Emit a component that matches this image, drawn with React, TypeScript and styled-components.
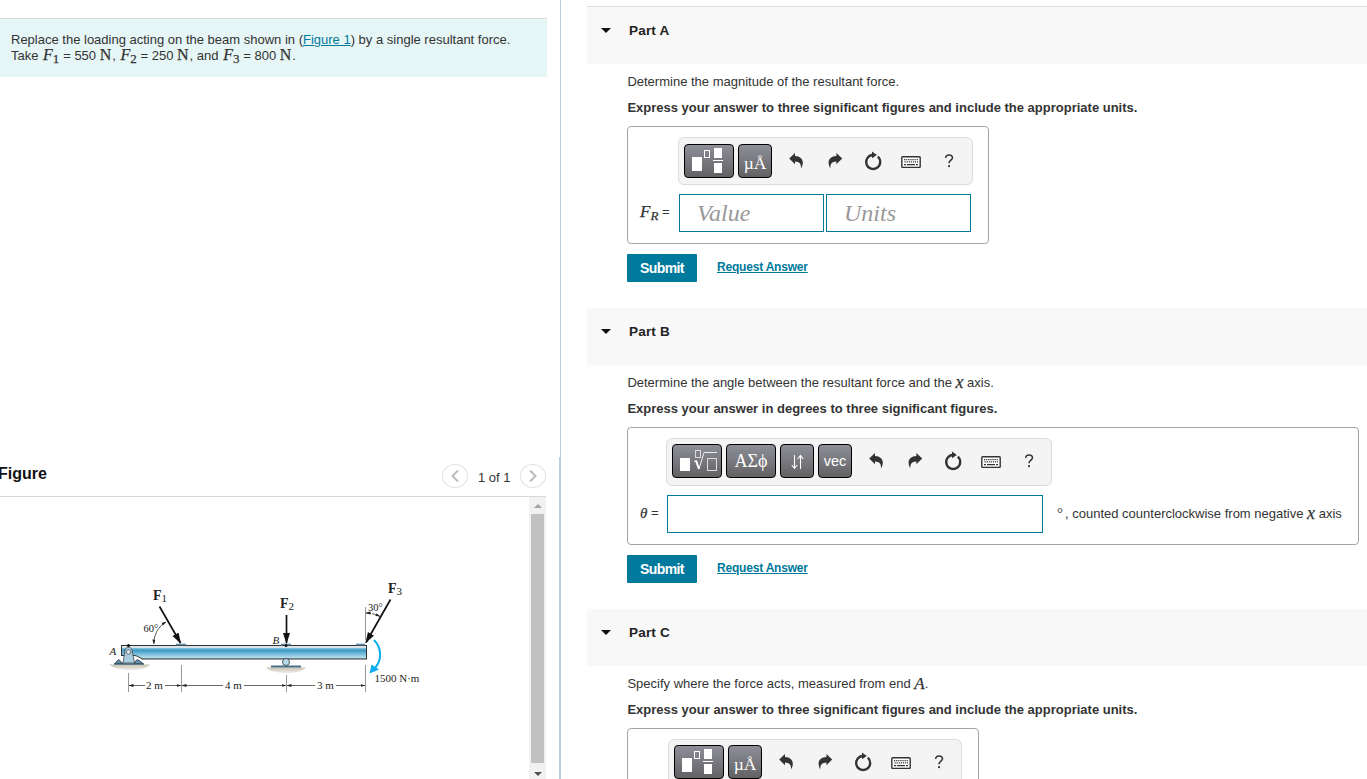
import React from 'react';
import styled, { createGlobalStyle } from 'styled-components';

const GlobalStyle = createGlobalStyle`
  * {
    box-sizing: border-box;
  }

  body {
    margin: 0;
    overflow: hidden;
    background: #fff;
    color: #333;
    font-family: 'Liberation Sans', Arial, sans-serif;
    font-size: 13px;
  }

  p {
    margin: 0;
  }
`;

const Page = styled.div`
  display: flex;
  width: 1367px;
  height: 779px;
  overflow: hidden;
`;

const LeftPane = styled.div`
  display: flex;
  flex-direction: column;
  width: 547px;
  padding-top: 18px;
`;

const Divider = styled.div`
  display: flex;
  flex-direction: column;
  align-items: flex-end;
  width: 14px;
  margin-right: 26px;
`;

const DividerLine = styled.div<{ $width: number; $height: number }>`
  flex: none;
  width: ${(p) => p.$width}px;
  height: ${(p) => p.$height}px;
  background: #b9cde0;
`;

const Problem = styled.div`
  height: 59px;
  padding: 13px 11px 0;
  border-top: 1px solid #dadada;
  background: #e6f6f6;
  line-height: 16px;
  white-space: nowrap;
`;

const Line = styled.p`
  height: 16px;
`;

const FigureLink = styled.a`
  color: #007a9c;
  text-decoration: underline;
`;

const MathText = styled.span<{ $size?: number; $italic?: boolean }>`
  font-family: 'Liberation Serif', 'Times New Roman', serif;
  font-size: ${(p) => p.$size ?? 16}px;
  font-style: ${(p) => (p.$italic ? 'italic' : 'normal')};
  line-height: 14px;
  vertical-align: -1px;
  -webkit-text-stroke: 0.25px currentColor;

  sub {
    font-size: 13px;
    font-style: normal;
    line-height: 0;
    vertical-align: -3px;
  }
`;

const Force = styled(MathText)`
  display: inline-block;
  width: 16.5px;
  margin-left: 1px;
  vertical-align: baseline;
`;

const Newton = styled(MathText)`
  display: inline-block;
  width: 12.5px;
  vertical-align: baseline;
`;

const DegreeMark = styled.span`
  margin-right: 2px;
  font-family: 'Liberation Serif', serif;
  font-size: 15px;
  line-height: 14px;
`;

const FigureHeader = styled.div`
  display: flex;
  align-items: center;
  justify-content: space-between;
  width: 546px;
  height: 42px;
  margin-top: 378px;
  border-bottom: 1px solid #d8d8d8;
`;

const FigureTitle = styled.div`
  margin: -3px 0 0 -2px;
  font-size: 16px;
  font-weight: bold;
  color: #111;
`;

const Pager = styled.div`
  display: flex;
  align-items: center;
  gap: 10px;
  line-height: 16px;
`;

const PagerLabel = styled.span`
  width: 32px;
  padding-top: 4px;
  white-space: nowrap;
`;

const PagerButton = styled.button`
  display: flex;
  align-items: center;
  justify-content: center;
  width: 26px;
  height: 24px;
  padding: 0;
  border: 1px solid #e2e2e2;
  border-radius: 50%;
  background: #fff;
`;

const FigureBody = styled.div`
  display: flex;
  width: 546px;
  height: 282px;
`;

const Scrollbar = styled.div`
  display: flex;
  flex-direction: column;
  align-items: center;
  width: 17px;
  padding-top: 7px;
  background: #f1f1f1;
`;

const Thumb = styled.div`
  width: 13px;
  height: 249px;
  margin: 6px 0 9px;
  background: #c1c1c1;
`;

const Triangle = styled.div<{ $up?: boolean; $size?: number; $color?: string }>`
  width: 0;
  height: 0;
  border: solid transparent;
  border-width: 0 ${(p) => p.$size ?? 4}px;
  ${(p) => (p.$up ? 'border-bottom' : 'border-top')}: ${(p) => p.$size ?? 4}px solid ${(p) => p.$color ?? '#505050'};
`;

const RightPane = styled.div`
  width: 780px;
  padding-top: 6px;
`;

const Section = styled.section`
  height: 301px;

  &:first-child {
    height: 302px;
    border-top: 1px solid #dedede;
  }
`;

const SectionHeader = styled.div`
  display: flex;
  align-items: center;
  gap: 17px;
  height: 57px;
  padding: 0 14px 10px;
  background: #f8f8f8;
`;

const PartTitle = styled.h2`
  margin: 0 0 0 1px;
  color: #222;
  font-size: 13.5px;
  line-height: 16px;
  letter-spacing: 0.2px;
`;

const SectionBody = styled.div`
  padding: 10px 0 0 40px;
  white-space: nowrap;
`;

const Instruction = styled.p<{ $bold?: boolean }>`
  height: 26px;
  padding-left: 0.4px;
  line-height: 16px;
  font-weight: ${(p) => (p.$bold ? 'bold' : 'normal')};
`;

const AnswerBox = styled.div<{ $width: number; $toolbar: number }>`
  width: ${(p) => p.$width}px;
  height: 118px;
  padding: 10px 0 0;
  border: 1px solid #a5a5a5;
  border-radius: 4px;

  > :first-child {
    margin-left: ${(p) => p.$toolbar}px;
  }
`;

const ToolbarBox = styled.div<{ $width: number; $raised?: boolean }>`
  display: flex;
  gap: 4px;
  width: ${(p) => p.$width}px;
  height: 48px;
  padding: ${(p) => (p.$raised ? 5 : 6)}px 5px;
  border: 1px solid #dcdcdc;
  border-radius: 6px;
  background: #f4f4f4;
`;

const DarkButton = styled.button<{ $wide?: boolean; $serif?: boolean; $size?: number; $drop?: number }>`
  display: flex;
  flex: none;
  align-items: center;
  justify-content: center;
  width: ${(p) => (p.$wide ? 50 : 34)}px;
  height: 34px;
  padding: ${(p) => p.$drop ?? 0}px 0 0;
  border: 1px solid #000;
  border-radius: 4px;
  background: linear-gradient(#8e8e99, #626264);
  color: #fff;
  font-family: ${(p) => (p.$serif ? "'Liberation Serif', serif" : "'Liberation Sans', sans-serif")};
  font-size: ${(p) => p.$size ?? 14}px;
  line-height: 20px;
`;

const IconTools = styled.div`
  display: flex;
  gap: 4px;
  margin-left: 4px;
`;

const IconButton = styled.span`
  display: flex;
  align-items: center;
  justify-content: center;
  width: 34px;
  height: 34px;
`;

const InputRow = styled.div`
  display: flex;
  align-items: center;
  height: 38px;
  margin-top: 9px;
`;

const InputLabel = styled.div<{ $width: number }>`
  width: ${(p) => p.$width}px;
  padding: 0 0 2px 12px;
  line-height: 16px;
  white-space: nowrap;
`;

const Field = styled.div<{ $width: number }>`
  display: flex;
  align-items: center;
  width: ${(p) => p.$width}px;
  height: 38px;
  margin-right: 2px;
  padding: 0 0 0 17px;
  border: 1px solid #007a9c;
  color: #999;
  font-family: 'Liberation Serif', serif;
  font-size: 24px;
  font-style: italic;
`;

const Suffix = styled.div`
  padding-left: 12px;
  line-height: 16px;
`;

const Actions = styled.div`
  display: flex;
  gap: 20px;
  margin-top: 10px;
`;

const Submit = styled.button`
  width: 70px;
  height: 28px;
  padding: 0;
  border: 0;
  border-radius: 1px;
  background: #007a9c;
  color: #fff;
  font: bold 14px 'Liberation Sans', sans-serif;
  letter-spacing: -0.6px;
`;

const RequestLink = styled.a`
  padding-top: 5px;
  color: #007a9c;
  font-size: 12px;
  font-weight: bold;
  line-height: 16px;
  letter-spacing: -0.2px;
  text-decoration: underline;
`;

const TemplateIcon = () => (
  <svg width="48" height="32" viewBox="0 0 48 32">
    <rect x="7" y="12" width="10" height="14" fill="#fff" />
    <rect x="19.5" y="5.5" width="5" height="7" fill="none" stroke="#fff" />
    <rect x="29" y="3" width="8" height="10" fill="#fff" />
    <rect x="28" y="15" width="10" height="1" fill="#fff" />
    <rect x="29" y="18" width="8" height="10" fill="#fff" />
  </svg>
);

const RootIcon = () => (
  <svg width="48" height="32" viewBox="0 0 48 32">
    <rect x="7" y="13" width="10" height="13" fill="#fff" />
    <rect x="22.5" y="5.5" width="5" height="7" fill="none" stroke="#ddd" />
    <path d="M21 17 L23 15.5 L26 24 L31 7.5 H44" fill="none" stroke="#eee" />
    <path d="M23 15.5 L26 24" stroke="#fff" strokeWidth="2" />
    <rect x="34.5" y="13.5" width="9" height="12" fill="none" stroke="#ddd" />
  </svg>
);

const ArrowsIcon = () => (
  <svg width="32" height="32" viewBox="0 0 32 32" fill="none" stroke="#fff" strokeWidth="1.1">
    <path d="M13.5 10 V23 M10.7 20 L13.5 23.3 L16.3 20 M19.5 24 V11 M16.7 14 L19.5 10.5 L22.3 14" />
  </svg>
);

const UndoIcon = ({ flip }: { flip?: boolean }) => (
  <svg width="16" height="18" viewBox="0 0 16 18">
    <path
      d="M0.2 6.6 L6 1 V4 C11 4 13.8 7 13.8 10.5 C13.8 13 13 15 12 16.3 C12.3 12 10.5 9.8 6 9.6 V12.2 Z"
      fill="#333"
      transform={flip ? 'translate(15.4 0) scale(-1 1)' : undefined}
    />
  </svg>
);

const ResetIcon = () => (
  <svg width="18" height="20" viewBox="0 0 18 20">
    <path d="M13.8 5.7 A7 7 0 1 1 8.7 4" fill="none" stroke="#333" strokeWidth="2.3" />
    <path d="M8 0.5 L12.8 3.9 L8 7.3 Z" fill="#333" />
  </svg>
);

const KeyboardIcon = () => (
  <svg width="20" height="14" viewBox="0 0 20 14">
    <rect x="0.8" y="2.8" width="18.4" height="10.6" rx="0.8" fill="#fff" stroke="#333" strokeWidth="1.4" />
    <path d="M3 5.6 H17 M3.5 7.9 H17" stroke="#333" strokeWidth="1.3" strokeDasharray="1.2 0.9" />
    <path d="M3 10.6 H5 M6 10.6 H14 M15 10.6 H17" stroke="#333" strokeWidth="1.4" />
  </svg>
);

const HelpIcon = () => (
  <svg width="12" height="16" viewBox="0 0 12 16">
    <path d="M2.7 5 C2.7 0.8 9.6 1 9.5 4.7 C9.4 7.2 6 7.1 6 10.3" fill="none" stroke="#333" strokeWidth="1.5" />
    <rect x="5.1" y="12.2" width="1.9" height="1.9" fill="#333" />
  </svg>
);

interface ToolbarProps {
  width: number;
  raised?: boolean;
  children: React.ReactNode;
}

const Toolbar = ({ width, raised, children }: ToolbarProps) => (
  <ToolbarBox $width={width} $raised={raised}>
    {children}
    <IconTools>
      <IconButton><UndoIcon /></IconButton>
      <IconButton><UndoIcon flip /></IconButton>
      <IconButton><ResetIcon /></IconButton>
      <IconButton><KeyboardIcon /></IconButton>
      <IconButton><HelpIcon /></IconButton>
    </IconTools>
  </ToolbarBox>
);

const UnitButtons = () => (
  <>
    <DarkButton $wide><TemplateIcon /></DarkButton>
    <DarkButton $serif $size={17.5} $drop={4}>µÅ</DarkButton>
  </>
);

const SymbolButtons = () => (
  <>
    <DarkButton $wide><RootIcon /></DarkButton>
    <DarkButton $wide $serif $size={18}>ΑΣϕ</DarkButton>
    <DarkButton><ArrowsIcon /></DarkButton>
    <DarkButton $size={14.5}>vec</DarkButton>
  </>
);

const PartHeader = ({ title }: { title: string }) => (
  <SectionHeader>
    <Triangle $size={5.5} $color="#111" />
    <PartTitle>{title}</PartTitle>
  </SectionHeader>
);

const SubmitRow = () => (
  <Actions>
    <Submit>Submit</Submit>
    <RequestLink>Request Answer</RequestLink>
  </Actions>
);

const BeamFigure = () => (
  <svg
    width="529"
    height="282"
    viewBox="0 497 529 282"
    fontFamily="'Liberation Serif', serif"
    fontSize="11"
    fill="#222"
  >
    <defs>
      <linearGradient id="beam" x1="0" y1="0" x2="0" y2="1">
        <stop offset="0.15" stopColor="#a5d0e3" />
        <stop offset="0.35" stopColor="#3a9bc6" />
        <stop offset="0.9" stopColor="#b4deee" />
        <stop offset="1" stopColor="#8fb4c4" />
      </linearGradient>
      <linearGradient id="ground" x1="0" y1="0" x2="0" y2="1">
        <stop offset="0" stopColor="#c9c3b4" />
        <stop offset="1" stopColor="#f1eee8" />
      </linearGradient>
      <marker id="force" markerUnits="userSpaceOnUse" markerWidth="12" markerHeight="10" refX="10" refY="4" orient="auto">
        <path d="M0 0.5 L11 4 L0 7.5 Z" fill="#111" />
      </marker>
      <marker id="dim" markerUnits="userSpaceOnUse" markerWidth="5" markerHeight="4" refX="4.5" refY="1.5" orient="auto-start-reverse">
        <path d="M0 0 L5 1.5 L0 3 Z" fill="#222" />
      </marker>
    </defs>

    <path d="M109 664.5 H150 C145 672 117 672 109 664.5 Z" fill="url(#ground)" />
    <path d="M266 667.5 H306 C300 675 273 675 266 667.5 Z" fill="url(#ground)" />

    <rect x="121.5" y="645.5" width="245" height="13.5" fill="url(#beam)" stroke="#333" />
    <rect x="122" y="646" width="244" height="2" fill="#dbe4e8" />
    <path d="M120.5 656 H134 C138 656 139 657 142 659 L140 661 H120.5 Z" fill="#fff" />
    <path d="M121.5 655.5 H134 C138 655.5 139 658 142 658.5" fill="none" stroke="#333" />
    <path d="M123 663 L125 650 C126 646.5 131 646.5 132 650 L134.5 663 Z" fill="#a9cee2" stroke="#444" strokeWidth="0.8" />
    <circle cx="128.5" cy="652" r="2.3" fill="#d7e9f2" stroke="#555" strokeWidth="0.8" />
    <path d="M115 663.5 L117 661 L119 659.5 L121 662 L123 663.5 Z M134 663.5 L137 659.5 L140 661 L143 663.5 Z" fill="#5f91ae" stroke="#334" strokeWidth="0.8" />
    <path d="M114 664 H144" stroke="#395d70" strokeWidth="1.5" />
    <circle cx="128.5" cy="645.5" r="1.6" fill="#111" />

    <rect x="176" y="643.7" width="10" height="1.6" fill="#648ca5" />
    <rect x="281" y="643.7" width="10" height="1.6" fill="#648ca5" />
    <rect x="356" y="643.7" width="9" height="1.6" fill="#648ca5" />
    <circle cx="286" cy="645.5" r="1.5" fill="#111" />
    <circle cx="286" cy="662" r="3.5" fill="#b7dced" stroke="#444" strokeWidth="0.9" />
    <path d="M271 666.5 H301" stroke="#456f85" strokeWidth="2" />

    <g stroke="#111" strokeWidth="1.7">
      <path d="M159.5 606.5 L180.5 643" markerEnd="url(#force)" />
      <path d="M286.5 615 V643" markerEnd="url(#force)" />
      <path d="M390.5 599.5 L366 642.5" markerEnd="url(#force)" />
    </g>

    <path d="M166 622 Q154 629 153.8 644" fill="none" stroke="#333" strokeWidth="0.8" markerStart="url(#dim)" markerEnd="url(#dim)" />
    <path d="M366 613 Q373 613 380 616.5" fill="none" stroke="#333" strokeWidth="0.8" strokeDasharray="5 1" markerStart="url(#dim)" markerEnd="url(#dim)" />

    <path d="M128.5 673 V692 M181.5 665 V692 M286.5 675 V692 M365.5 665 V692 M365.5 607 V640" stroke="#999" />

    <g stroke="#444" strokeWidth="0.8">
      <path d="M145 685.5 H129" markerEnd="url(#dim)" />
      <path d="M165 685.5 H181" markerEnd="url(#dim)" />
      <path d="M223 685.5 H182" markerEnd="url(#dim)" />
      <path d="M244 685.5 H286" markerEnd="url(#dim)" />
      <path d="M315 685.5 H287" markerEnd="url(#dim)" />
      <path d="M336 685.5 H365" markerEnd="url(#dim)" />
    </g>

    <path d="M374 640 C382 648 382 660 375 668" fill="none" stroke="#08aef0" strokeWidth="2" />
    <path d="M369.5 673.5 L371.5 664.5 L379 669.5 Z" fill="#08aef0" />

    <text x="153" y="600" fontSize="14" fontWeight="bold">F<tspan fontSize="11" fontWeight="normal" dy="1.5">1</tspan></text>
    <text x="280" y="608" fontSize="14" fontWeight="bold">F<tspan fontSize="11" fontWeight="normal" dy="1.5">2</tspan></text>
    <text x="388" y="593" fontSize="14" fontWeight="bold">F<tspan fontSize="11" fontWeight="normal" dy="1.5">3</tspan></text>
    <text x="143.5" y="632" fontSize="10.5">60°</text>
    <text x="368" y="611" fontSize="10.5">30°</text>
    <text x="109.5" y="655" fontStyle="italic">A</text>
    <text x="272.5" y="643.5" fontStyle="italic">B</text>
    <text x="146" y="689">2 m</text>
    <text x="225" y="689">4 m</text>
    <text x="317" y="689">3 m</text>
    <text x="374.5" y="681.5">1500 N·m</text>
  </svg>
);

const App: React.FC = () => {
  return (
    <>
      <GlobalStyle />
      <Page>
        <LeftPane>
          <Problem>
            <Line>
              Replace the loading acting on the beam shown in (<FigureLink>Figure 1</FigureLink>) by a single resultant force.
            </Line>
            <Line>
              Take <Force $italic>F<sub>1</sub></Force> = 550 <Newton>N</Newton>,{' '}
              <Force $italic>F<sub>2</sub></Force> = 250 <Newton>N</Newton>, and{' '}
              <Force $italic>F<sub>3</sub></Force> = 800 <Newton>N</Newton>.
            </Line>
          </Problem>
          <FigureHeader>
            <FigureTitle>Figure</FigureTitle>
            <Pager>
              <PagerButton>
                <svg width="10" height="14" fill="none" stroke="#bbb" strokeWidth="2"><path d="M8 1.5 L2.5 7 L8 12.5" /></svg>
              </PagerButton>
              <PagerLabel>1 of 1</PagerLabel>
              <PagerButton>
                <svg width="10" height="14" fill="none" stroke="#bbb" strokeWidth="2"><path d="M2 1.5 L7.5 7 L2 12.5" /></svg>
              </PagerButton>
            </Pager>
          </FigureHeader>
          <FigureBody>
            <BeamFigure />
            <Scrollbar>
              <Triangle $up $color="#a3a3a3" />
              <Thumb />
              <Triangle />
            </Scrollbar>
          </FigureBody>
        </LeftPane>

        <Divider>
          <DividerLine $width={1} $height={457} />
          <DividerLine $width={2} $height={322} />
        </Divider>

        <RightPane>
          <Section>
            <PartHeader title="Part A" />
            <SectionBody>
              <Instruction>Determine the magnitude of the resultant force.</Instruction>
              <Instruction $bold>
                Express your answer to three significant figures and include the appropriate units.
              </Instruction>
              <AnswerBox $width={362} $toolbar={50}>
                <Toolbar width={295}><UnitButtons /></Toolbar>
                <InputRow>
                  <InputLabel $width={51}>
                    <MathText $italic $size={17}>F<sub><i>R</i></sub></MathText> =
                  </InputLabel>
                  <Field $width={145}>Value</Field>
                  <Field $width={145}>Units</Field>
                </InputRow>
              </AnswerBox>
              <SubmitRow />
            </SectionBody>
          </Section>

          <Section>
            <PartHeader title="Part B" />
            <SectionBody>
              <Instruction>
                Determine the angle between the resultant force and the <MathText $italic $size={18}>x</MathText> axis.
              </Instruction>
              <Instruction $bold>Express your answer in degrees to three significant figures.</Instruction>
              <AnswerBox $width={732} $toolbar={38}>
                <Toolbar width={386} raised><SymbolButtons /></Toolbar>
                <InputRow>
                  <InputLabel $width={39}>
                    <MathText $italic $size={15}>θ</MathText> =
                  </InputLabel>
                  <Field $width={376} />
                  <Suffix>
                    <DegreeMark>°</DegreeMark>, counted counterclockwise from negative{' '}
                    <MathText $italic $size={18}>x</MathText> axis
                  </Suffix>
                </InputRow>
              </AnswerBox>
              <SubmitRow />
            </SectionBody>
          </Section>

          <Section>
            <PartHeader title="Part C" />
            <SectionBody>
              <Instruction>
                Specify where the force acts, measured from end <MathText $italic $size={17}>A</MathText>.
              </Instruction>
              <Instruction $bold>
                Express your answer to three significant figures and include the appropriate units.
              </Instruction>
              <AnswerBox $width={352} $toolbar={40}>
                <Toolbar width={294} raised><UnitButtons /></Toolbar>
              </AnswerBox>
            </SectionBody>
          </Section>
        </RightPane>
      </Page>
    </>
  );
};

export default App;
